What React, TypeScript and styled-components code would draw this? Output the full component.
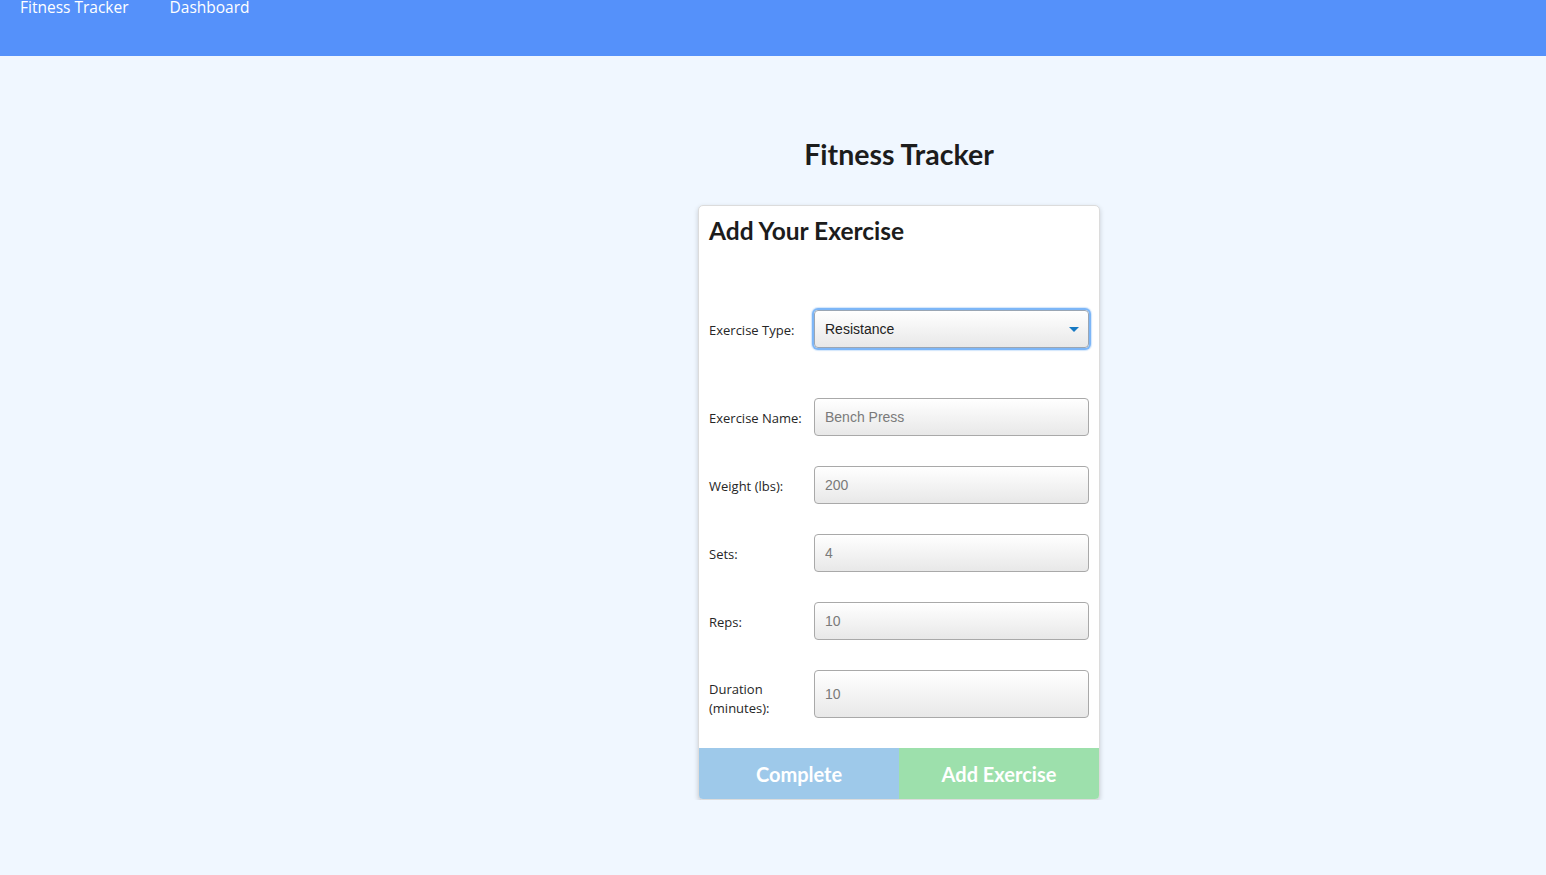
import React from "react";
import styled, { createGlobalStyle } from "styled-components";

const GlobalStyle = createGlobalStyle`
  html, body {
    margin: 0;
    padding: 0;
    background: #f0f7ff;
  }
  * { box-sizing: border-box; }
`;

const NavBar = styled.nav`
  height: 56px;
  background: #5591fa;
  display: flex;
  align-items: flex-start;
  gap: 41px;
  padding-left: 20px;
  overflow: hidden;
`;

const NavLink = styled.a`
  font-family: "Open Sans", "Noto Sans", sans-serif;
  font-size: 15.5px;
  line-height: 20px;
  margin-top: -3px;
  color: #ffffff;
  text-decoration: none;
  cursor: pointer;
`;

const Main = styled.main`
  display: flex;
  flex-direction: column;
  align-items: center;
  padding-left: 252px;
  padding-top: 81px;
`;

const PageTitle = styled.h1`
  font-family: Lato, "Liberation Sans", sans-serif;
  font-weight: 700;
  font-size: 28.5px;
  line-height: 34px;
  color: #1c1c1c;
  margin: 0 0 34px;
`;

const Card = styled.section`
  width: 402px;
  background: #ffffff;
  border: 1px solid #dcdcdc;
  border-radius: 5px;
  box-shadow: 0 2px 5px rgba(0, 0, 0, 0.18);
  overflow: hidden;
`;

const CardBody = styled.div`
  padding: 10px 10px 30px;
`;

const CardHeading = styled.h2`
  font-family: Lato, "Liberation Sans", sans-serif;
  font-weight: 700;
  font-size: 24.5px;
  line-height: 29px;
  color: #1c1c1c;
  margin: 0 0 65px;
`;

const Form = styled.div`
  display: grid;
  grid-template-columns: 105px 275px;
  row-gap: 30px;
  align-items: center;
`;

const Label = styled.label<{ $extra?: number; $lower?: number }>`
  font-family: "Open Sans", "Noto Sans", sans-serif;
  font-size: 13px;
  line-height: 19px;
  color: #262626;
  max-width: 98px;
  padding-top: ${(p) => p.$lower ?? 2}px;
  margin-bottom: ${(p) => p.$extra ?? 0}px;
`;

const fieldBase = `
  width: 275px;
  border: 1px solid #a9a9a9;
  border-radius: 4px;
  background: linear-gradient(to bottom, #ffffff 0%, #e8e8e8 100%);
  font-family: "Liberation Sans", Arial, sans-serif;
  font-size: 14px;
  padding: 0 10px;
  outline: none;
`;

const SelectBox = styled.div`
  ${fieldBase}
  height: 38px;
  margin-bottom: 20px;
  display: flex;
  align-items: center;
  justify-content: space-between;
  color: #222222;
  border-color: #9aa6b4;
  box-shadow: 0 0 0 2px #7db6f7, 0 0 1px 3px rgba(125, 182, 247, 0.35);
  padding-right: 9px;
`;

const Caret = styled.span`
  width: 0;
  height: 0;
  border-left: 5px solid transparent;
  border-right: 5px solid transparent;
  border-top: 5px solid #1679c3;
`;

const Input = styled.input<{ $tall?: boolean }>`
  ${fieldBase}
  height: ${(p) => (p.$tall ? 48 : 38)}px;
  color: #333333;
  &::placeholder {
    color: #7a7a7a;
  }
`;

const ButtonRow = styled.div`
  display: grid;
  grid-template-columns: 1fr 1fr;
`;

const ActionButton = styled.button<{ $tone: string }>`
  height: 51px;
  border: none;
  background: ${(p) => p.$tone};
  color: #ffffff;
  font-family: Lato, "Liberation Sans", sans-serif;
  font-weight: 700;
  font-size: 20px;
  cursor: pointer;
`;

export default function App() {
  return (
    <>
      <GlobalStyle />
      <NavBar>
        <NavLink>Fitness Tracker</NavLink>
        <NavLink>Dashboard</NavLink>
      </NavBar>
      <Main>
        <PageTitle>Fitness Tracker</PageTitle>
        <Card>
          <CardBody>
            <CardHeading>Add Your Exercise</CardHeading>
            <Form>
              <Label $extra={20}>Exercise Type:</Label>
              <SelectBox>
                <span>Resistance</span>
                <Caret />
              </SelectBox>
              <Label>Exercise Name:</Label>
              <Input placeholder="Bench Press" />
              <Label>Weight (lbs):</Label>
              <Input placeholder="200" />
              <Label>Sets:</Label>
              <Input placeholder="4" />
              <Label>Reps:</Label>
              <Input placeholder="10" />
              <Label $lower={10}>Duration (minutes):</Label>
              <Input $tall placeholder="10" />
            </Form>
          </CardBody>
          <ButtonRow>
            <ActionButton $tone="#9ec9ea">Complete</ActionButton>
            <ActionButton $tone="#9de0ac">Add Exercise</ActionButton>
          </ButtonRow>
        </Card>
      </Main>
    </>
  );
}
